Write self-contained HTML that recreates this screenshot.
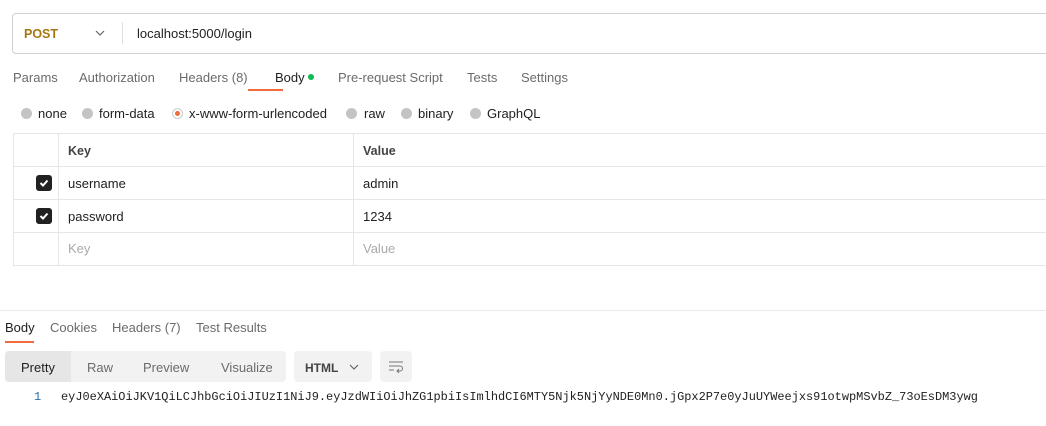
<!DOCTYPE html>
<html><head><meta charset="utf-8"><style>
body{margin:0;width:1046px;height:426px;background:#fff;font-family:"Liberation Sans",sans-serif;font-size:13px;color:#212121;position:relative;overflow:hidden}
.a{position:absolute;white-space:nowrap}
.t{margin-top:1px}
.g{color:#6b6b6b}
.r{position:absolute;width:11px;height:11px;border-radius:50%;background:#c4c4c4;top:108px}
.hl{position:absolute;left:13px;width:1040px;height:1px;background:#e6e6e6}
.vl{position:absolute;top:133px;width:1px;height:133px;background:#e6e6e6}
.cb{position:absolute;left:36px;width:16px;height:16px;background:#212121;border-radius:3px}
</style></head><body>
<div class="a" style="left:12px;top:13px;width:1050px;height:39px;border:1px solid #d0d0d0;border-radius:4px"></div>
<div class="a t" style="left:24px;top:26px;color:#a6780f;font-weight:bold;font-size:12.5px">POST</div>
<svg class="a" style="left:95px;top:29px" width="10" height="8"><path d="M1 2l4 4 4-4" stroke="#666" fill="none" stroke-width="1.2"/></svg>
<div class="a" style="left:122px;top:22px;width:1px;height:22px;background:#e0e0e0"></div>
<div class="a t" style="left:137px;top:25px">localhost:5000/login</div>

<div class="a g t" style="left:13px;top:69px">Params</div>
<div class="a g t" style="left:79px;top:69px">Authorization</div>
<div class="a g t" style="left:179px;top:69px">Headers (8)</div>
<div class="a t" style="left:275px;top:69px">Body</div>
<div class="a" style="left:308px;top:74px;width:6px;height:6px;border-radius:50%;background:#0cbb52"></div>
<div class="a" style="left:248px;top:89px;width:35px;height:2px;background:#f26b3a"></div>
<div class="a g t" style="left:338px;top:69px">Pre-request Script</div>
<div class="a g t" style="left:467px;top:69px">Tests</div>
<div class="a g t" style="left:521px;top:69px">Settings</div>

<div class="r" style="left:21px"></div><div class="a t" style="left:38px;top:105px">none</div>
<div class="r" style="left:82px"></div><div class="a t" style="left:99px;top:105px">form-data</div>
<div class="r" style="left:172px;background:#fff;border:1px solid #ccc;width:9px;height:9px"></div><div class="a" style="left:175px;top:111px;width:5px;height:5px;border-radius:50%;background:#f26b3a"></div>
<div class="a t" style="left:189px;top:105px">x-www-form-urlencoded</div>
<div class="r" style="left:346px"></div><div class="a t" style="left:364px;top:105px">raw</div>
<div class="r" style="left:401px"></div><div class="a t" style="left:418px;top:105px">binary</div>
<div class="r" style="left:470px"></div><div class="a t" style="left:487px;top:105px">GraphQL</div>

<div class="hl" style="top:133px"></div><div class="hl" style="top:166px"></div><div class="hl" style="top:199px"></div><div class="hl" style="top:232px"></div><div class="hl" style="top:265px"></div>
<div class="vl" style="left:13px"></div><div class="vl" style="left:58px"></div><div class="vl" style="left:353px"></div>
<div class="a t" style="left:68px;top:143px;font-weight:bold;font-size:12.5px;color:#444">Key</div>
<div class="a t" style="left:363px;top:143px;font-weight:bold;font-size:12.5px;color:#444">Value</div>
<div class="cb" style="top:175px"></div><svg class="a" style="left:39px;top:178px" width="10" height="10"><path d="M1.5 5l2.5 2.5 4.5-5" stroke="#fff" stroke-width="2" fill="none"/></svg>
<div class="cb" style="top:208px"></div><svg class="a" style="left:39px;top:211px" width="10" height="10"><path d="M1.5 5l2.5 2.5 4.5-5" stroke="#fff" stroke-width="2" fill="none"/></svg>
<div class="a t" style="left:68px;top:175px">username</div><div class="a t" style="left:363px;top:175px">admin</div>
<div class="a t" style="left:68px;top:208px">password</div><div class="a t" style="left:363px;top:208px">1234</div>
<div class="a t" style="left:68px;top:240px;color:#aaa">Key</div><div class="a t" style="left:363px;top:240px;color:#aaa">Value</div>

<div class="a" style="left:0;top:310px;width:1046px;height:1px;background:#eaeaea"></div>
<div class="a t" style="left:5px;top:319px">Body</div>
<div class="a" style="left:5px;top:341px;width:29px;height:2px;background:#f26b3a"></div>
<div class="a g t" style="left:50px;top:319px">Cookies</div>
<div class="a g t" style="left:112px;top:319px">Headers (7)</div>
<div class="a g t" style="left:196px;top:319px">Test Results</div>

<div class="a" style="left:5px;top:351px;width:281px;height:31px;background:#f2f2f2;border-radius:4px"></div>
<div class="a" style="left:5px;top:351px;width:66px;height:31px;background:#e6e6e6;border-radius:4px 0 0 4px"></div>
<div class="a t" style="left:21px;top:359px">Pretty</div>
<div class="a g t" style="left:87px;top:359px">Raw</div>
<div class="a g t" style="left:143px;top:359px">Preview</div>
<div class="a g t" style="left:221px;top:359px">Visualize</div>
<div class="a" style="left:294px;top:351px;width:78px;height:31px;background:#f2f2f2;border-radius:4px"></div>
<div class="a t" style="left:305px;top:360px;font-weight:bold;font-size:12px;color:#444">HTML</div>
<svg class="a" style="left:349px;top:363px" width="10" height="8"><path d="M1 2l4 4 4-4" stroke="#666" fill="none" stroke-width="1.2"/></svg>
<div class="a" style="left:380px;top:351px;width:32px;height:31px;background:#f2f2f2;border-radius:4px"></div>
<svg class="a" style="left:388px;top:359px" width="16" height="14"><path d="M1 3h14M1 7h11a2.5 2.5 0 010 5H9M11 10l-2 2 2 2M1 11h5" stroke="#777" fill="none" stroke-width="1"/></svg>

<div class="a t" style="left:34px;top:389px;font-family:'Liberation Mono',monospace;font-size:12px;color:#2a6fa8">1</div>
<div class="a t" style="left:61px;top:389px;font-family:'Liberation Mono',monospace;font-size:11.95px;color:#212121">eyJ0eXAiOiJKV1QiLCJhbGciOiJIUzI1NiJ9.eyJzdWIiOiJhZG1pbiIsImlhdCI6MTY5Njk5NjYyNDE0Mn0.jGpx2P7e0yJuUYWeejxs91otwpMSvbZ_73oEsDM3ywg</div>
</body></html>
